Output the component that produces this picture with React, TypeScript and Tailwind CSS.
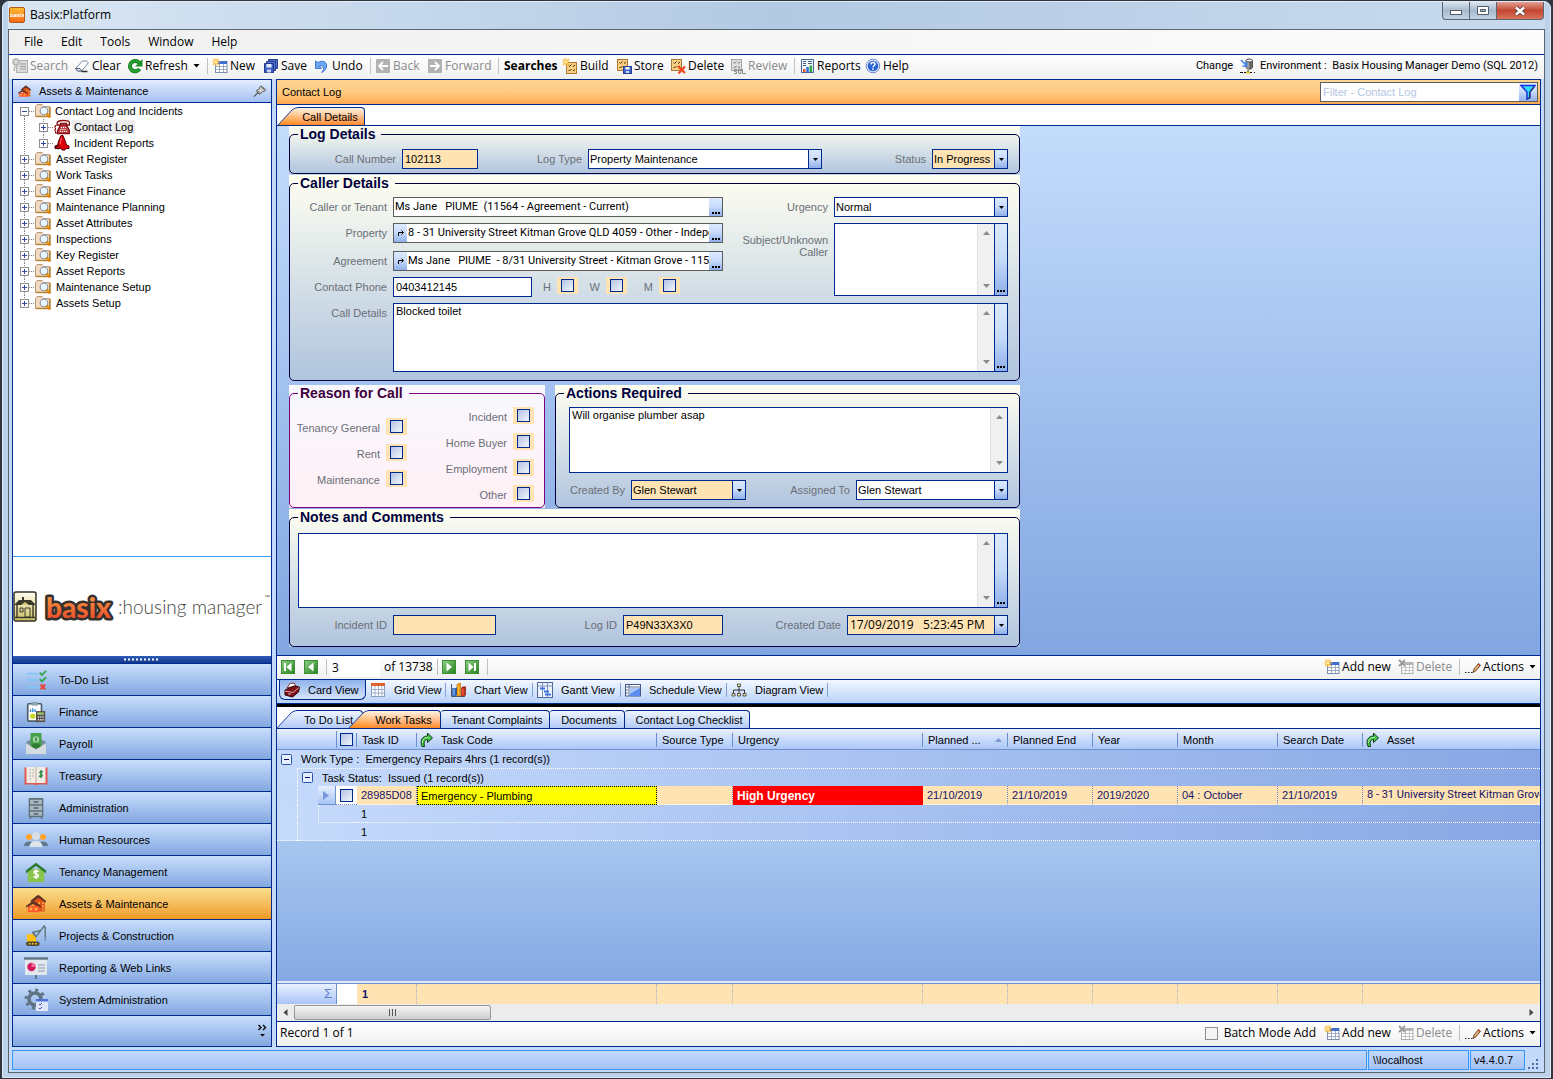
import React from "react";

const UI = "font-['Open_Sans','Noto_Sans',sans-serif]";
const ARIAL = "font-['Liberation_Sans',Arial,sans-serif]";
const NARROW = "font-['Roboto','Liberation_Sans',sans-serif]";
const GLOSS = "bg-linear-to-b from-[#dceafe] via-[#c6dafa] to-[#8fb0ea]";

/* ---------- icons ---------- */

type IconProps = { size?: number; children: React.ReactNode; box?: number };
function Svg({ size = 16, box = 16, children }: IconProps) {
  return (
    <svg width={size} height={size} viewBox={`0 0 ${box} ${box}`} aria-hidden="true" className="shrink-0">
      {children}
    </svg>
  );
}

function TableBody({ head, line, x = 3 }: { head: string; line: string; x?: number }) {
  return (
    <g>
      <rect x={x + 0.5} y="3.5" width={15 - x - 0.5} height="11" fill="#fff" stroke={line} />
      <rect x={x + 1} y="3" width={14 - x} height="3" fill={head} />
      <path d={`M${x + 1} 8.5H15M${x + 1} 11.5H15M${x + 4.5} 6V14M${x + 8.5} 6V14`} stroke={line} strokeWidth="1" fill="none" opacity="0.7" />
    </g>
  );
}
const Burst = () => (
  <g stroke="#ffb73a" strokeWidth="1.100">
    <path d="M4 0V8M0 4H8M1 1L7 7M7 1L1 7" />
    <circle cx="4" cy="4" r="1.400" fill="#fff3b0" stroke="none" />
  </g>
);
const Check = ({ grey = false }: { grey?: boolean }) => (
  <g>
    <rect x="1.5" y="1.5" width="10" height="11" fill={grey ? "#dcdcdc" : "#fccf80"} stroke={grey ? "#a8a8a8" : "#a87a35"} />
    <path d="M3.500 4.500l1 1 2-2M8 5.500l2-1.500M3.500 9l1 1 2-2M8 10l2-1.500" stroke={grey ? "#777" : "#3a2c10"} fill="none" />
  </g>
);

const NewTable = () => (<Svg><TableBody head="#3f6fd0" line="#7d8fae" /><Burst /></Svg>);
const DelTable = () => (
  <Svg><TableBody head="#b5b5b5" line="#b0b0b0" /><path d="M1 1l6 6M7 1L1 7" stroke="#9a9a9a" strokeWidth="1.8" /></Svg>
);
const SearchIcon = () => (
  <Svg>
    <rect x="4.500" y="2.500" width="11" height="12" fill="#dadada" stroke="#b0b0b0" />
    <path d="M8 6h6M8 8.500h6M8 11h6" stroke="#a0a0a0" />
    <circle cx="4" cy="4" r="3" fill="#d6d6d6" stroke="#b4b4b4" strokeWidth="1.500" />
    <path d="M3 8l-1 5" stroke="#b4b4b4" strokeWidth="1.500" />
  </Svg>
);
const Eraser = () => (
  <Svg>
    <path d="M1.500 10.500L8.500 3h4l2 1.500-7 8.500h-4z" fill="#fff" stroke="#7f8bad" />
    <path d="M1.500 10.500h4.500l2 2.500H3.500z" fill="#dfe6f4" stroke="#5d6880" />
    <path d="M7.500 13.500h6" stroke="#333" strokeWidth="1.500" />
  </Svg>
);
const Refresh = () => (
  <Svg>
    <path d="M12.300 5A5.200 5.200 0 1 0 12.500 11" fill="none" stroke="#0f6a18" strokeWidth="4" />
    <path d="M12.300 5A5.200 5.200 0 1 0 12.500 11" fill="none" stroke="#25a02f" strokeWidth="2.800" />
    <path d="M15.500 1v7.500H8z" fill="#1c8f27" />
  </Svg>
);
const SaveIcon = () => (
  <Svg>
    <path d="M5.500 1.500h9v9h-3v-6h-6z" fill="#4a69c8" stroke="#2a3f93" />
    <path d="M3.500 3.500h9v9h-9z" fill="#5677d6" stroke="#2a3f93" />
    <path d="M1.500 5.500h9v9h-9z" fill="#3d5fc6" stroke="#233685" />
    <rect x="3.500" y="6" width="5" height="3.500" fill="#e7edfb" /><rect x="4" y="11.500" width="4" height="3" fill="#c9d4f1" />
  </Svg>
);
const Undo = () => (
  <Svg>
    <path d="M4 4.500C9 1.500 13.500 4 12.500 9 12 11.500 10 13.500 7.500 14.500c2-2.500 2.500-4 1.500-5.500-.8-1.300-2-1.300-3.500-.8L7.500 10.500H1.500V3z" fill="#6aa6f2" stroke="#2d66c4" strokeWidth=".8" />
  </Svg>
);
const Nav = ({ d }: { d: string }) => (
  <Svg><rect x="1" y="1" width="14" height="14" rx="1" fill="#b2b2b2" /><path d={d} stroke="#fff" strokeWidth="1.800" fill="none" /></Svg>
);
const Build = () => (<Svg><g transform="translate(3 3)"><Check /></g><Burst /></Svg>);
const Store = () => (
  <Svg><Check /><rect x="7.500" y="8.500" width="8" height="7" fill="#3f66c8" stroke="#223f92" /><rect x="9.500" y="9" width="4" height="2.500" fill="#fff" /><rect x="10" y="13" width="3" height="2" fill="#cfdcf8" /></Svg>
);
const DeleteSearch = () => (<Svg><Check /><path d="M8 8l7 7M15 8.500L8.500 15.500" stroke="#f04423" strokeWidth="2.200" /></Svg>);
const Review = () => (
  <Svg><Check grey /><path d="M7 11.500H4.500v2h2v2H4M8.500 11.500h2.500v4H8.500zM12.500 11v4.500H16" stroke="#8a8a8a" fill="none" /></Svg>
);
const Reports = () => (
  <Svg>
    <path d="M2.500 1.500h12v13h-12z" fill="#f3f7ff" stroke="#44639a" />
    <path d="M4 3.500h3M4 5.500h3M4 7.500h3M9 3.500h4M9 5.500h4" stroke="#49607f" />
    <rect x="4" y="11" width="2.500" height="3" fill="#e8582a" /><rect x="7.300" y="9" width="2.500" height="5" fill="#2f6fdc" /><rect x="10.600" y="7.500" width="2.500" height="6.500" fill="#2bab3a" />
  </Svg>
);
const HelpIcon = () => (
  <Svg>
    <circle cx="8" cy="8" r="6.800" fill="#e9f0ff" stroke="#6a86c9" /><circle cx="8" cy="8" r="5.300" fill="#2a62d6" />
    <path d="M6 6.500c0-2.600 4-2.600 4-.2 0 1.500-2 1.500-2 3.200M8 10.500v1.500" stroke="#fff" strokeWidth="1.500" fill="none" />
  </Svg>
);
const Db = () => (
  <Svg>
    <path d="M6 2.500v6.500c0 2.500 6.500 3 6.500 0V2.500z" fill="#a2a2a2" stroke="#4c4c4c" /><path d="M10.500 4v7" stroke="#555" strokeWidth="2" />
    <ellipse cx="9.200" cy="2.500" rx="3.300" ry="1.500" fill="#f0f0f0" stroke="#4c4c4c" />
    <path d="M1 2l5 5M6.500 3.500V8H2.500" stroke="#3f7fe8" strokeWidth="1.600" fill="none" />
    <path d="M0 14.500h3M4 14.500h8M14 14.500h1M8 12v3" stroke="#111" /><path d="M6 14.500h4" stroke="#d9c52c" strokeWidth="2" />
  </Svg>
);
const House = ({ size = 16 }: { size?: number }) => (
  <Svg size={size}>
    <path d="M5 5l5-3.500 5 4V14H8z" fill="#e0521c" /><path d="M3.500 5.500L9 1h1.500L16 5.500v1.500L10 3 4.500 6.500z" fill="#5b3226" />
    <path d="M1.500 9.500h9V14.500h-9z" fill="#ff5a2c" /><path d="M0 9.500L5 6h2l5 3.500v1.200L6 8 0 10.700z" fill="#5d2f25" />
    <path d="M3 11h2v2H3zM7 11h2v2H7zM10 6.500h1.200V8H10zM12.800 6.500H14V8h-1.200zM12.800 9H14v1.500h-1.200zM12.800 11.500H14V13h-1.200z" fill="#ffb44a" />
  </Svg>
);
const Pin = () => (
  <Svg size={14}><path d="M7.500 3.500L9 2l5.500 4.500-1.500 2-2.500.3-2.500 3-1-.2L4 8.300l.5-1.300 3-1.500z" fill="#d4d4d4" stroke="#555" /><path d="M9.500 3.500l3.500 3M5 8l3 2.500" stroke="#333" /><path d="M5.500 10L1 14.500" stroke="#555" strokeWidth="1.300" /></Svg>
);
const Folder = () => (
  <Svg>
    <path d="M.500 3.500L2 1.500h5l1.500 2h6v10H.500z" fill="#f0d9c0" stroke="#b59a7c" /><path d="M1 13.500h14V4" stroke="#b5822f" fill="none" strokeWidth="1.500" />
    <circle cx="9" cy="8" r="3.800" fill="#eaf4ff" stroke="#8f9bab" strokeWidth="1.200" /><path d="M11.500 10.500l3.500 4" stroke="#e08a12" strokeWidth="2.500" />
  </Svg>
);
const Phone = () => (
  <Svg>
    <path d="M3 5C3 2 5 1.500 9 1.500s6.500 0 6.500 3v1.500h-3V4.500h-6V6H3z" fill="#fff" stroke="#8b0f12" strokeWidth="1.300" />
    <path d="M6.500 6h6l3 6v2.500h-12V12z" fill="#c04a4c" stroke="#8b0f12" strokeWidth="1.300" />
    <path d="M7 8.500h5M6.500 10.500h6M6 12.500h7" stroke="#fff" strokeDasharray="1 1" /><path d="M0 8h3M1.500 6v8M0 11h3M1 14h2" stroke="#8b0f12" strokeDasharray="2 1" />
  </Svg>
);
const Siren = () => (
  <Svg><path d="M7 .5h2L11 5.500l1.500 4.500L15 11v2.500h-3L11 15H8l-1-1.500H1V11l2.500-1L5 5z" fill="#e0000c" stroke="#5a0004" /><path d="M7.500 3L6 9" stroke="#ff7a7a" /><path d="M1 12l4-1.500M4 14l2.500-1" stroke="#111" fill="none" /></Svg>
);
const Funnel = () => (
  <Svg><path d="M1 1.500h14L10 8v5.500l-3 1.500V8z" fill="#30dcff" stroke="#1b30d8" strokeWidth="1.500" /><path d="M14 3L9.500 8.500V14L7.500 15" stroke="#333" fill="none" /></Svg>
);
const Pager = ({ d }: { d: string }) => (
  <Svg size={14} box={14}>
    <defs><linearGradient id="pg" x1="0" y1="0" x2="1" y2="1"><stop offset="0" stopColor="#8ed184" /><stop offset="1" stopColor="#23811c" /></linearGradient></defs>
    <rect x=".500" y=".500" width="13" height="13" fill="url(#pg)" stroke="#3a8f33" /><path d={d} fill="#fff" />
  </Svg>
);
const Pencil = () => (
  <Svg><path d="M0 13.500h1.500M3 13.500h1.500M6 13.500h1.500" stroke="#222" /><path d="M8 13.500l1-3.500 4.500-5.500 2 1.700-4.500 5.500z" fill="#e8b070" stroke="#4a2b18" strokeWidth=".8" /><path d="M13 5l2 1.500" stroke="#c22" /></Svg>
);
const GreenArrow = () => (
  <Svg><path d="M3 14.500C.5 8.500 3.500 4 8.500 4V1L13.500 6 8.500 10.500V7.500C5.500 7.500 4.500 10 5.500 14.500z" fill="#45c648" stroke="#0a3a10" /><path d="M3.500 11C3 8 5 5.500 9.500 5.500" stroke="#baf0a8" fill="none" /></Svg>
);

const CardIcon = () => (
  <Svg><path d="M3 6l3-4.500 4-.5 2 3z" fill="#fff" stroke="#7a3035" /><path d="M1 8l9-4 5.500 1-1 5-6 5L1 13z" fill="#7b1218" stroke="#34060a" /><path d="M1 9l8 1.500 6-5M4 12h3" stroke="#e9a7aa" fill="none" /></Svg>
);
const GridIcon = () => (
  <Svg><rect x="1.500" y="1.500" width="13" height="13" fill="#fff" stroke="#8a9bbd" /><rect x="1" y="1" width="14" height="3" fill="#e0622e" /><path d="M1.500 7.500h13M1.500 11h13M5 4v10.500M8.500 4v10.500M12 4v10.500" stroke="#9fb0cf" /></Svg>
);
const ChartIcon = () => (
  <Svg><path d="M1.500 2v12.500H15" stroke="#556" fill="none" /><path d="M2.500 6.500h3V14h-3z" fill="#5c98ee" stroke="#1f4a9a" strokeWidth=".6" /><path d="M5.500 6.500L7 5v8l-1.500 1z" fill="#1f4a9a" /><path d="M7 2.500h3V14H7z" fill="#ffb52e" stroke="#a5670c" strokeWidth=".6" /><path d="M7 2.500L8.500 1H11v12l-1 1V2.500z" fill="#d98a15" /><path d="M11.500 6h3v8h-3z" fill="#e4452a" stroke="#8c1f10" strokeWidth=".6" /><path d="M11.500 6l1-1.500H16V13l-1.500 1V6z" fill="#a52916" /></Svg>
);
const GanttIcon = () => (
  <Svg><rect x=".500" y=".500" width="15" height="15" fill="#eef4ff" stroke="#50679c" /><path d="M.5 4H15.500M5.500.500v15M10.500.500v15" stroke="#7f92bd" /><path d="M3 6.500h5M7 9.500h5M8 12.500h6" stroke="#3c74dd" strokeWidth="2" /></Svg>
);
const ScheduleIcon = () => (
  <Svg><rect x=".500" y="2.500" width="15" height="11.500" fill="#fff" stroke="#44588c" /><path d="M5 6h10v8H5z" fill="#5b8df0" /><path d="M5 6h10L5 12z" fill="#a9c6fb" /><path d="M1 5h14M4 3v11M1 8h2M1 11h2" stroke="#5b6c96" /></Svg>
);
const DiagramIcon = () => (
  <Svg><path d="M8 5v3M2.500 11V8h11v3M8 8v3" stroke="#333" fill="none" /><g fill="#f6f0a8" stroke="#555"><path d="M6.500 2h3v2.500h-3zM1 11.500h3V14H1zM6.500 11.500h3V14h-3zM12 11.500h3V14h-3z" /></g></Svg>
);

/* side navigation pictures, 24-unit grid */
const ToDo = () => (<Svg size={22} box={24}><path d="M2 5h12M2 12h12M2 20h12" stroke="#84c5f7" strokeWidth="2" /><path d="M16 4l2.500 2.500L23 2M16 11l2.500 2.500L23 9" stroke="#35a853" strokeWidth="2" fill="none" /><path d="M17 17l5 5M22 17l-5 5" stroke="#ee4438" strokeWidth="2.200" /></Svg>);
const Finance = () => (<Svg size={22} box={24}><rect x="3" y="3" width="15" height="19" rx="1" fill="#fff" stroke="#4c5f69" strokeWidth="1.800" /><rect x="7" y="1" width="7" height="4" fill="#8fa3ad" /><path d="M6 12V9M8.500 12V8M11 12v-3" stroke="#3189dd" strokeWidth="1.500" /><circle cx="8.500" cy="16.500" r="3" fill="#c9d92a" /><rect x="12" y="11" width="10" height="12" fill="#59504d" /><rect x="13.500" y="12.500" width="7" height="2.500" fill="#9ccc65" /><path d="M14 17.500h7M14 20.500h7" stroke="#ddd" strokeWidth="1.800" strokeDasharray="1.500 1" /></Svg>);
const Payroll = () => (<Svg size={22} box={24}><path d="M1 10l5-3h12l5 3v13H1z" fill="#78909c" /><rect x="6" y="0" width="12" height="16" fill="#43a047" /><circle cx="12" cy="7" r="3.500" fill="#a5d6a7" /><path d="M12 5v4" stroke="#1b6b20" strokeWidth="1.500" /><path d="M7 13l5-2.500L17 13v4H7z" fill="#2e7d32" /><path d="M1 11l11 7 11-7v12H1z" fill="#d5dce0" /></Svg>);
const Treasury = () => (<Svg size={24} box={24}><path d="M.500 3.500h23v17h-10l-1.500 1-1.500-1H.500z" fill="#e05a52" /><path d="M2.500 3h9.500v16H2.500zM12 3h9.500v16H12z" fill="#f1ebe5" /><path d="M12 3v16" stroke="#b9aaa0" /><path d="M5 6h5M5 9h5M5 12h5M5 15h3" stroke="#bbb0a8" strokeDasharray="2 1" /><path d="M19 8c-3-2-4 1-2 2s1.500 3.500-2 2M17 6v8" stroke="#2e8b4a" fill="none" strokeWidth="1.400" /></Svg>);
const Cabinet = () => (<Svg size={22} box={24}><rect x="4" y="1" width="16" height="21" rx="1" fill="#60717c" /><path d="M5.500 3h13v5h-13zM5.500 9.500h13v5h-13zM5.500 16h13v4.500h-13z" fill="#a9b8c0" /><path d="M9.500 5.500h5M9.500 12h5M9.500 18.500h5" stroke="#4f5f69" strokeWidth="1.600" /><path d="M6 22v1.500M18 22v1.500" stroke="#4f5f69" strokeWidth="2" /></Svg>);
const People = () => (<Svg size={24} box={24}><circle cx="5" cy="9" r="3" fill="#ffa52b" /><circle cx="19" cy="9" r="3" fill="#ffa52b" /><path d="M0 18c0-6 10-6 10 0zM14 18c0-6 10-6 10 0z" fill="#61798a" /><circle cx="12" cy="8" r="4" fill="#d8dfe4" /><path d="M5.500 19c0-8 13-8 13 0z" fill="#dfe5e9" /></Svg>);
const Tenancy = () => (<Svg size={22} box={24}><path d="M3 9h18v14H3z" fill="#8bc34a" /><path d="M12 2L23 10v3.500L12 5.500 1 13.500V10z" fill="#2e7d32" /><path d="M15 11.500c-5-2.500-7 1.500-3 2.500s3.500 5.500-3 3M12 9.500v10" stroke="#fff" fill="none" strokeWidth="1.600" /></Svg>);
const Crane = () => (<Svg size={22} box={24}><path d="M2 10h7l3 3v6H2z" fill="#fcc015" /><path d="M8 8l4 5L21 1l1 2v11M12 13l-3-5 8-2" stroke="#5f7680" fill="none" strokeWidth="1.600" /><path d="M22 14c2 1 0 4-1.500 2" stroke="#5f7680" fill="none" /><rect x="1" y="18" width="15" height="5" rx="2.500" fill="#4b4a3a" /><path d="M4 20.500h10" stroke="#fcc015" strokeWidth="1.800" strokeDasharray="2 1.500" /></Svg>);
const Board = () => (<Svg size={24} box={24}><path d="M1 3h22v16H1z" fill="#e3e8ec" /><path d="M0 2.500h24" stroke="#64788a" strokeWidth="2.500" /><circle cx="7.500" cy="11" r="4.200" fill="#d3185e" /><path d="M7.500 11V6.800a4.200 4.200 0 0 1 4.200 4.200z" fill="#f06a9a" /><path d="M14 9h7M14 12h7M14 15h7" stroke="#a2b4c2" strokeWidth="1.300" /><path d="M12 19v4" stroke="#64788a" strokeWidth="2" /></Svg>);
const Gear = () => (<Svg size={24} box={24}><circle cx="11" cy="11" r="6" fill="none" stroke="#5d7381" strokeWidth="3.500" /><circle cx="11" cy="11" r="9" fill="none" stroke="#5d7381" strokeWidth="3" strokeDasharray="3 4.060" /><rect x="12" y="11" width="12" height="12" fill="#dfe6fb" /><rect x="12" y="11" width="12" height="2.500" fill="#4f74d9" /><path d="M15 16l1 1 2-2M15 20l1 1 2-2" stroke="#3e51c2" fill="none" /></Svg>);

const Caret = () => (<svg width="7" height="4" viewBox="0 0 7 4" aria-hidden="true" className="shrink-0"><path d="M.500 0h6L3.500 3.500z" fill="#000" /></svg>);

/* ---------- form controls ---------- */

const Label = ({ w, id, children }: { w: string; id: string; children: React.ReactNode }) => (
  <label htmlFor={id} className={`${w} mr-1.5 shrink-0 text-right leading-3 text-[#6b6f78]`}>{children}</label>
);

function TextBox({ id, value, w, tint }: { id: string; value: string; w: string; tint?: boolean }) {
  return <input id={id} defaultValue={value} className={`${w} h-5 shrink-0 border border-[#00298f] px-0.5 outline-none ${tint ? "bg-[#ffe3b3]" : "bg-white"}`} />;
}

function Combo({ id, value, w, tint, big }: { id: string; value: string; w: string; tint?: boolean; big?: boolean }) {
  return (
    <div className={`${w} grid h-5 shrink-0 grid-cols-[1fr_13px] border border-[#00298f] ${tint ? "bg-[#ffe3b3]" : "bg-white"}`}>
      <select id={id} className={`col-span-2 col-start-1 row-start-1 w-full appearance-none bg-transparent whitespace-pre outline-none ${big ? `pl-0.5 text-[12px] ${UI}` : "pl-px"}`}>
        <option>{value}</option>
      </select>
      <span className={`pointer-events-none col-start-2 row-start-1 flex items-center justify-center border-l border-[#00298f] ${GLOSS}`}>
        <svg width="5" height="3" viewBox="0 0 5 3" aria-hidden="true"><path d="M0 0h5L2.500 3z" fill="#000" /></svg>
      </span>
    </div>
  );
}

function Lookup({ id, value, jump }: { id: string; value: string; jump?: boolean }) {
  return (
    <div className="flex h-5 w-[330px] shrink-0 border border-[#5d5d5d] bg-white">
      {jump && (
        <button aria-label="Open record" className={`flex w-[13px] shrink-0 items-center justify-center ${GLOSS}`}>
          <svg width="8" height="8" viewBox="0 0 8 8" aria-hidden="true"><path d="M1.500 7V3.500H6M4.500 1.500l2 2-2 2" stroke="#000" fill="none" /></svg>
        </button>
      )}
      <input id={id} defaultValue={value} className={`min-w-0 flex-1 pl-px outline-none ${NARROW}`} />
      <button aria-label="Browse" className={`flex w-[13px] shrink-0 items-end justify-center pb-0.5 ${GLOSS}`}><Dots /></button>
    </div>
  );
}
const Dots = () => (<svg width="8" height="2" viewBox="0 0 8 2" aria-hidden="true"><path d="M0 0h2v2H0zM3 0h2v2H3zM6 0h2v2H6z" fill="#000" /></svg>);

function Memo({ id, value, size, more, label }: { id: string; value: string; size: string; more?: boolean; label?: string }) {
  return (
    <div className={`${size} flex shrink-0 border border-[#00298f] bg-white`}>
      <textarea id={id} aria-label={label} defaultValue={value} className="min-w-0 flex-1 resize-none overflow-hidden px-0.5 leading-[14px] outline-none" />
      <div className="flex w-[17px] shrink-0 flex-col items-center justify-between border-l border-[#e2e2e2] bg-[#f0f0f0] py-[7px]">
        <svg width="7" height="4" viewBox="0 0 7 4" aria-hidden="true"><path d="M0 4h7L3.500 0z" fill="#8b8b8b" /></svg>
        <svg width="7" height="4" viewBox="0 0 7 4" aria-hidden="true"><path d="M0 0h7L3.500 4z" fill="#8b8b8b" /></svg>
      </div>
      {more && <button aria-label="Expand" className={`flex w-[13px] shrink-0 items-end justify-center border-l border-[#00298f] pb-[3px] ${GLOSS}`}><Dots /></button>}
    </div>
  );
}

const Tick = ({ id, label }: { id?: string; label?: string }) => (
  <input id={id} aria-label={label} type="checkbox" className="block size-[13px] appearance-none border border-[#00298f] bg-linear-to-br from-[#b3c3e3] to-[#f3f6fc]" />
);
const TickPad = ({ id }: { id: string }) => (
  <span className="flex h-[17px] w-[21px] shrink-0 items-center justify-center bg-[#ffe3b3]"><Tick id={id} /></span>
);
function TickRow({ id, label, w }: { id: string; label: string; w: string }) {
  return (<div className="flex h-[17px] items-center"><Label id={id} w={w}><span className="block pt-0.5">{label}</span></Label><TickPad id={id} /></div>);
}

function Group({ title, plum, grow, children }: { title: string; plum?: boolean; grow?: string; children: React.ReactNode }) {
  return (
    <div className={`${grow ?? ""} flex min-w-0 flex-col ${plum ? "bg-linear-to-b from-[#f8f8ff] to-[#fff0f5]" : "bg-linear-to-b from-[#fffff0] to-[#b0c4de]"}`}>
      <fieldset className={`min-w-0 flex-1 rounded-[5px] border ${plum ? "border-[#800080]" : "border-[#000040]"}`}>
        <legend className={`ml-2 h-4 pr-1.5 pl-0.5 text-[14px] leading-4 font-bold ${plum ? "text-[#40003c]" : "text-[#000040]"}`}>{title}</legend>
        {children}
      </fieldset>
    </div>
  );
}

/* ---------- tabs ---------- */

function Tab({ label, hot, slant, w, lap }: { label: string; hot?: boolean; slant?: boolean; w: string; lap?: boolean }) {
  const gid = hot ? "tabHot" : "tabCool";
  return (
    <button role="tab" aria-selected={!!hot} className={`flex h-[18px] shrink-0 ${lap ? "-ml-3.5" : ""}`}>
      {slant && (
        <svg width="20" height="18" viewBox="0 0 20 18" aria-hidden="true" className="shrink-0">
          <defs>
            <linearGradient id={gid} x1="0" y1="0" x2="0" y2="1">
              <stop offset="0" stopColor={hot ? "#fff3e2" : "#eef4fe"} /><stop offset="1" stopColor={hot ? "#ff8a1c" : "#b3cbf7"} />
            </linearGradient>
          </defs>
          <path d="M0 18L14 3Q17 .500 20 .500V18z" fill={`url(#${gid})`} /><path d="M0 18L14 3Q17 .500 20 .500" fill="none" stroke="#1d3fa0" />
        </svg>
      )}
      <span className={`${w} flex h-[18px] items-center justify-center rounded-tr-[4px] border-t border-r border-[#00298f] bg-linear-to-b whitespace-nowrap ${slant ? "pr-0.5" : "rounded-tl-[3px] pl-1"} ${hot ? "from-[#fff3e2] to-[#ff8a1c]" : "from-[#eef4fe] to-[#b3cbf7]"}`}>
        {label}
      </span>
    </button>
  );
}

/* ---------- window parts ---------- */

const Sep = ({ w = "w-[6px]" }: { w?: string }) => (<span className={`flex h-4 shrink-0 ${w}`}><span className="h-full w-px bg-[#c0c0c0]" /></span>);

function Tool({ icon, label, w, off }: { icon: React.ReactNode; label: string; w: string; off?: boolean }) {
  return (<button disabled={off} className={`flex shrink-0 items-center gap-0.5 whitespace-nowrap ${w} ${off ? "text-[#8a8a8a]" : "text-black"}`}>{icon}{label}</button>);
}

function Toolbar() {
  return (
    <div className={`flex h-6 items-center bg-linear-to-b from-white to-[#f0f0f0] pb-0.5 pl-[3px] text-[12px] ${UI}`}>
      <Tool icon={<SearchIcon />} label="Search" w="w-[62px]" off />
      <Tool icon={<Eraser />} label="Clear" w="w-[53px]" />
      <Tool icon={<Refresh />} label="Refresh" w="w-[66px]" />
      <button aria-label="Refresh options" className="flex w-[14px] shrink-0"><Caret /></button>
      <Sep w="w-[5px]" />
      <Tool icon={<NewTable />} label="New" w="w-[51px]" />
      <Tool icon={<SaveIcon />} label="Save" w="w-[51px]" />
      <Tool icon={<Undo />} label="Undo" w="w-[56px]" />
      <Sep w="w-[5px]" />
      <Tool icon={<Nav d="M13 8H4M8 4L4 8l4 4" />} label="Back" w="w-[52px]" off />
      <Tool icon={<Nav d="M3 8h9M8 4l4 4-4 4" />} label="Forward" w="w-[71px]" off />
      <Sep w="w-[6px]" />
      <b className="w-[58px] shrink-0 font-bold">Searches</b>
      <Tool icon={<Build />} label="Build" w="w-[54px]" />
      <Tool icon={<Store />} label="Store" w="w-[54px]" />
      <Tool icon={<DeleteSearch />} label="Delete" w="w-[60px]" />
      <Tool icon={<Review />} label="Review" w="w-[64px]" off />
      <Sep w="w-[5px]" />
      <Tool icon={<Reports />} label="Reports" w="w-[66px]" />
      <Tool icon={<HelpIcon />} label="Help" w="w-[50px]" />
      <div className={`ml-auto flex items-center gap-1 pr-1.5 text-[11px] whitespace-pre ${NARROW}`}>
        Change <Db />Environment :{"  "}Basix Housing Manager Demo (SQL 2012)
      </div>
    </div>
  );
}

function Toggle({ open, first, last }: { open?: boolean; first?: boolean; last?: boolean }) {
  return (
    <button aria-label={open ? "Collapse" : "Expand"} className="shrink-0">
      <svg width="18" height="16" viewBox="0 0 18 16" aria-hidden="true" className="block">
        <path d={`${first ? "" : "M7.500 0V4"}${last ? "" : "M7.500 13V16"}M12 8.500H18`} stroke="#808080" strokeDasharray="1 1" />
        <rect x="3.500" y="4.500" width="8" height="8" fill="#fff" stroke="#8e8e8e" />
        <path d={open ? "M5 8.500h5" : "M5 8.500h5M7.500 6v5"} stroke="#2b4a9c" />
      </svg>
    </button>
  );
}

const branches = ["Asset Register", "Work Tasks", "Asset Finance", "Maintenance Planning", "Asset Attributes", "Inspections", "Key Register", "Asset Reports", "Maintenance Setup", "Assets Setup"];

function Leaf({ icon, label, active, last }: { icon: React.ReactNode; label: string; active?: boolean; last?: boolean }) {
  return (
    <li className="flex h-4 items-center">
      <svg width="19" height="16" viewBox="0 0 19 16" aria-hidden="true" className="shrink-0"><path d="M7.500 0V16" stroke="#808080" strokeDasharray="1 1" /></svg>
      <Toggle last={last} />{icon}
      <span className={`ml-0.5 px-0.5 ${active ? "bg-[#ececec]" : ""}`}>{label}</span>
    </li>
  );
}

function Tree() {
  return (
    <ul className="min-h-[453px] flex-1 bg-white pl-1">
      <li>
        <div className="flex h-4 items-center"><Toggle open first /><Folder /><span className="ml-1">Contact Log and Incidents</span></div>
        <ul>
          <Leaf icon={<Phone />} label="Contact Log" active />
          <Leaf icon={<Siren />} label="Incident Reports" last />
        </ul>
      </li>
      {branches.map((b, i) => (
        <li key={b} className="flex h-4 items-center"><Toggle last={i === branches.length - 1} /><Folder /><span className="ml-[5px]">{b}</span></li>
      ))}
    </ul>
  );
}

const sections: [string, React.ReactNode][] = [
  ["To-Do List", <ToDo />], ["Finance", <Finance />], ["Payroll", <Payroll />], ["Treasury", <Treasury />],
  ["Administration", <Cabinet />], ["Human Resources", <People />], ["Tenancy Management", <Tenancy />],
  ["Assets & Maintenance", <House size={20} />], ["Projects & Construction", <Crane />],
  ["Reporting & Web Links", <Board />], ["System Administration", <Gear />],
];

function Logo() {
  return (
    <div className="flex h-[100px] items-center border-t border-[#3399ff] bg-white">
      <svg width="24" height="32" viewBox="0 0 24 32" aria-hidden="true" className="shrink-0">
        <defs><linearGradient id="lg" x1="0" y1="0" x2="0" y2="1"><stop offset="0" stopColor="#fffdf0" /><stop offset="1" stopColor="#cdbf5e" /></linearGradient></defs>
        <rect x="1" y="1" width="22" height="29" rx="2" fill="url(#lg)" stroke="#33312a" strokeWidth="1.500" />
        <path d="M1 14L6 9h3V6h2v3h7l5 5z" fill="#3b382c" /><path d="M4 14v12M20 14v12M2 26.500h20" stroke="#3b382c" strokeWidth="1.400" />
        <path d="M7 17h3v4H7zM12 17h5v9h-5z" fill="none" stroke="#3b382c" /><path d="M8 14l4-3 4 3z" fill="#d8cc7c" />
      </svg>
      <svg width="76" height="40" viewBox="0 0 76 40" role="img" aria-label="basix" className="ml-[5px] shrink-0">
        <defs><linearGradient id="bx" x1="0" y1="0" x2="0" y2="1"><stop offset="0.300" stopColor="#f58a3c" /><stop offset="0.900" stopColor="#e8482a" /></linearGradient></defs>
        <text x="4" y="31" fontSize="28" fontWeight="900" fontFamily="Lato, 'Open Sans', sans-serif" fill="url(#bx)" stroke="#33302d" strokeWidth="5" strokeLinejoin="round" paintOrder="stroke">basix</text>
      </svg>
      <span className="font-['Lato',sans-serif] text-[19px] leading-6 font-light whitespace-nowrap text-[#45463c]">:housing manager</span>
      <span className="mb-5 ml-0.5 text-[6px] leading-3 text-[#55564c]">™</span>
    </div>
  );
}

function Sidebar() {
  return (
    <aside className="flex w-[260px] shrink-0 flex-col border border-[#00298f]">
      <div className="flex h-[23px] items-center border-b border-[#00298f] bg-linear-to-b from-[#e3edfd] to-[#a5c0f2] pr-1 pl-[5px]">
        <House size={13} /><span className="ml-2 flex-1">Assets &amp; Maintenance</span>
        <button aria-label="Pin"><Pin /></button>
      </div>
      <Tree />
      <Logo />
      <div className="flex h-[7px] items-center justify-center bg-linear-to-b from-[#2d5cb8] to-[#12398f]">
        <svg width="36" height="3" viewBox="0 0 36 3" aria-hidden="true"><path d="M0 1.500h36" stroke="#fff" strokeWidth="2" strokeDasharray="2 2" /></svg>
      </div>
      <nav className="flex flex-col">
        {sections.map(([label, icon]) => (
          <button key={label} className={`flex h-8 items-center border-t border-[#00298f] bg-linear-to-b text-left ${label === "Assets & Maintenance" ? "from-[#fbdf8c] to-[#ee9a1d]" : "from-[#c9dffc] to-[#82a7e0]"}`}>
            <span className="flex w-[46px] justify-center">{icon}</span>{label}
          </button>
        ))}
        <div className="flex h-[31px] items-center justify-end border-t border-[#00298f] bg-linear-to-b from-[#c9dffc] to-[#82a7e0] pr-1">
          <button aria-label="More sections">
            <svg width="9" height="14" viewBox="0 0 9 14" aria-hidden="true"><path d="M.5 1l2.500 2.500L.5 6M5 1l2.500 2.500L5 6" stroke="#000" fill="none" strokeWidth="1.300" /><path d="M2 10h5l-2.500 2.500z" /></svg>
          </button>
        </div>
      </nav>
    </aside>
  );
}

function CardForm() {
  return (
    <div className="flex-none bg-linear-to-b from-[#c4dcfc] to-[#82a6e0] pb-2 pl-3">
      <div className="flex w-[731px] flex-col">
        <Group title="Log Details">
          <div className="flex items-center pt-[7px] pb-1">
            <Label id="num" w="w-[106px]">Call Number</Label><TextBox id="num" value="102113" w="w-[76px]" tint />
            <Label id="type" w="w-[104px]">Log Type</Label><Combo id="type" value="Property Maintenance" w="w-[234px]" />
            <Label id="status" w="w-[104px]">Status</Label><Combo id="status" value="In Progress" w="w-[76px]" tint />
          </div>
        </Group>
        <div className="pt-px">
          <Group title="Caller Details">
            <div className="flex flex-col gap-1.5 pt-[6px] pb-2">
              <div className="flex">
                <div className="flex flex-col gap-1.5">
                  <div className="flex items-center"><Label id="caller" w="w-[97px]">Caller or Tenant</Label><Lookup id="caller" value="Ms Jane   PIUME  (11564 - Agreement - Current)" /></div>
                  <div className="flex items-center"><Label id="prop" w="w-[97px]">Property</Label><Lookup id="prop" jump value="8 - 31 University Street Kitman Grove QLD 4059 - Other - Independent" /></div>
                  <div className="flex items-center pt-0.5"><Label id="agr" w="w-[97px]">Agreement</Label><Lookup id="agr" jump value="Ms Jane   PIUME  - 8/31 University Street - Kitman Grove - 11564" /></div>
                  <div className="flex items-start">
                    <div className="flex items-center"><Label id="phone" w="w-[97px]">Contact Phone</Label><TextBox id="phone" value="0403412145" w="w-[139px]" /></div>
                    <TickRow id="h" label="H" w="w-[19px]" /><TickRow id="w" label="W" w="w-[22px]" /><TickRow id="m" label="M" w="w-[26px]" />
                  </div>
                </div>
                <div className="flex flex-col gap-1.5">
                  <div className="flex items-center"><Label id="urg" w="w-[105px]">Urgency</Label><Combo id="urg" value="Normal" w="w-[174px]" /></div>
                  <div className="flex items-start">
                    <Label id="subj" w="w-[105px]"><span className="block pt-[11px]">Subject/Unknown<br />Caller</span></Label>
                    <Memo id="subj" value="" size="h-[73px] w-[174px]" more />
                  </div>
                </div>
              </div>
              <div className="flex items-start">
                <Label id="det" w="w-[97px]"><span className="block pt-1">Call Details</span></Label>
                <Memo id="det" value="Blocked toilet" size="h-[69px] w-[615px]" more />
              </div>
            </div>
          </Group>
        </div>
        <div className="flex gap-2.5 pt-1">
          <Group title="Reason for Call" plum grow="w-[256px]">
            <div className="flex">
              <div className="flex flex-col gap-[9px] pt-[17px]">
                <TickRow id="tg" label="Tenancy General" w="w-[90px]" /><TickRow id="rent" label="Rent" w="w-[90px]" /><TickRow id="maint" label="Maintenance" w="w-[90px]" />
              </div>
              <div className="flex flex-col gap-[9px] pt-1.5">
                <TickRow id="inc" label="Incident" w="w-[100px]" /><TickRow id="hb" label="Home Buyer" w="w-[100px]" /><TickRow id="emp" label="Employment" w="w-[100px]" /><TickRow id="oth" label="Other" w="w-[100px]" />
              </div>
            </div>
          </Group>
          <Group title="Actions Required" grow="flex-1">
            <div className="flex flex-col gap-[7px] pt-1.5 pb-[7px] pl-[13px]">
              <Memo id="act" label="Actions Required" value="Will organise plumber asap" size="h-[66px] w-[439px]" />
              <div className="flex items-center">
                <Label id="by" w="w-[56px]">Created By</Label><Combo id="by" value="Glen Stewart" w="w-[115px]" tint />
                <Label id="to" w="w-[104px]">Assigned To</Label><Combo id="to" value="Glen Stewart" w="w-[152px]" />
              </div>
            </div>
          </Group>
        </div>
        <div className="pt-px">
          <Group title="Notes and Comments">
            <div className="flex flex-col gap-[7px] pt-2 pb-[11px]">
              <div className="pl-2"><Memo id="notes" label="Notes and Comments" value="" size="h-[75px] w-[710px]" more /></div>
              <div className="flex items-center">
                <Label id="iid" w="w-[97px]">Incident ID</Label><TextBox id="iid" value="" w="w-[103px]" tint />
                <Label id="lid" w="w-[121px]">Log ID</Label><TextBox id="lid" value="P49N33X3X0" w="w-[100px]" tint />
                <Label id="cd" w="w-[118px]">Created Date</Label><Combo id="cd" value={"17/09/2019\u00a0\u00a0 5:23:45 PM"} w="w-[161px]" tint big />
              </div>
            </div>
          </Group>
        </div>
      </div>
    </div>
  );
}

function RecordTools() {
  return (
    <>
      <Tool icon={<NewTable />} label="Add new" w="w-[74px]" />
      <Tool icon={<DelTable />} label="Delete" w="w-[61px]" off />
      <Sep w="w-[6px]" />
      <button className="flex items-center gap-0.5 whitespace-nowrap"><Pencil />Actions<span className="ml-[3px]"><Caret /></span></button>
    </>
  );
}

const views: [string, React.ReactNode, string][] = [
  ["Grid View", <GridIcon />, "w-[76px]"], ["Chart View", <ChartIcon />, "w-[83px]"], ["Gantt View", <GanttIcon />, "w-[84px]"],
  ["Schedule View", <ScheduleIcon />, "w-[102px]"], ["Diagram View", <DiagramIcon />, "w-[97px]"],
];

function Pagerbar() {
  const b = "shrink-0";
  return (
    <div className={`flex h-[25px] items-center border-t border-b border-[#00298f] bg-linear-to-b from-white to-[#f0f0f0] pr-1 pb-px pl-1 text-[12px] ${UI}`}>
      <button aria-label="First" className={`${b} mr-[9px]`}><Pager d="M3 3h2v8H3zM10.500 2.500v9L5.500 7z" /></button>
      <button aria-label="Previous" className={`${b} mr-2`}><Pager d="M9.500 2.500v9L4 7z" /></button>
      <Sep w="w-1" />
      <input aria-label="Record number" defaultValue="3" className="h-5 w-[50px] bg-white px-0.5 outline-none" />
      <span className="w-[57px] pl-1 whitespace-nowrap">of 13738</span>
      <Sep w="w-[5px]" />
      <button aria-label="Next" className={`${b} mr-[9px]`}><Pager d="M4.500 2.500v9L10 7z" /></button>
      <button aria-label="Last" className={`${b} mr-2`}><Pager d="M3.500 2.500v9L8.500 7zM9 3h2v8H9z" /></button>
      <Sep />
      <div className="ml-auto flex items-center"><RecordTools /></div>
    </div>
  );
}

function ViewStrip() {
  return (
    <div className="flex h-6 items-start border-b border-[#00298f] bg-linear-to-b from-[#f3f8ff] to-[#b9d2f8] pl-0.5">
      <button className="flex h-5 w-[87px] items-center rounded-b-[6px] border border-t-0 border-[#00298f] bg-linear-to-b from-[#8fb2ec] to-[#d5e4fb] pl-1"><CardIcon /><span className="ml-2">Card View</span></button>
      {views.map(([label, icon, w]) => (
        <button key={label} className={`${w} ml-1 flex h-5 items-center whitespace-nowrap`}>
          {icon}<span className="ml-2 flex-1 text-left">{label}</span><span className="h-3.5 w-px bg-[#7f9edb]" />
        </button>
      ))}
    </div>
  );
}

const heads = ["Source Type", "Urgency", "Planned ...", "Planned End", "Year", "Month", "Search Date"];
const HEAD = "h-[21px] border-b border-[#6d8fd0] p-0 pt-px text-left font-normal whitespace-nowrap";
const Bar = ({ tight }: { tight?: boolean }) => <span className={`-ml-px h-3.5 w-px shrink-0 bg-[#6d8fd0] ${tight ? "mr-0.5" : "mr-[5px]"}`} />;
const CELL = "overflow-hidden border-r border-b border-dotted border-r-[#6b86c8] border-b-white p-0 pl-1 whitespace-nowrap text-[#15156b]";

function Fold() {
  return (
    <button aria-label="Collapse group" className="shrink-0">
      <svg width="11" height="11" viewBox="0 0 11 11" aria-hidden="true" className="block"><rect x=".500" y=".500" width="10" height="10" rx="1" fill="#e6efff" stroke="#2c52a8" /><path d="M3 5.500h5" stroke="#000050" /></svg>
    </button>
  );
}

function TaskGrid() {
  return (
    <div className="overflow-hidden bg-linear-to-r from-[#c6dafb] to-[#88a7e4]">
      <table className="w-full table-fixed border-separate border-spacing-0">
        <colgroup>
          <col className="w-5" /><col className="w-[21px]" /><col className="w-[18px]" /><col className="w-[21px]" /><col className="w-[60px]" /><col className="w-[240px]" />
          <col className="w-[76px]" /><col className="w-[190px]" /><col className="w-[85px]" /><col className="w-[85px]" /><col className="w-[85px]" /><col className="w-[100px]" /><col className="w-[85px]" /><col />
        </colgroup>
        <thead className="bg-linear-to-b from-[#e8f0fe] to-[#a9c5f6]">
          <tr>
            <th colSpan={3} className={HEAD} aria-label="Row" />
            <th className={HEAD}><div className="flex h-[17px] items-center border-l border-[#6d8fd0] pl-[3px]"><Tick label="Select all" /></div></th>
            <th className={HEAD}><div className="flex items-center"><Bar />Task ID</div></th>
            <th className={HEAD}><div className="flex items-center"><Bar tight /><GreenArrow /><span className="ml-1.5">Task Code</span></div></th>
            {heads.map((h) => (
              <th key={h} className={HEAD}>
                <div className="flex items-center pr-1.5"><Bar /><span className="flex-1">{h}</span>
                  {h === "Planned ..." && <svg width="7" height="4" viewBox="0 0 7 4" aria-hidden="true"><path d="M0 4h7L3.500 0z" fill="#7c97d4" /></svg>}
                </div>
              </th>
            ))}
            <th className={HEAD}><div className="flex items-center"><Bar tight /><GreenArrow /><span className="ml-1.5">Asset</span></div></th>
          </tr>
        </thead>
        <tbody>
          <tr className="h-[18px]">
            <td colSpan={14} className="p-0"><div className="flex items-center gap-[9px] pl-1"><Fold /><span>Work Type :&nbsp; Emergency Repairs 4hrs (1 record(s))</span></div></td>
          </tr>
          <tr className="h-[18px]">
            <td className="p-0" />
            <td colSpan={13} className="border-t border-l border-dotted border-white p-0"><div className="flex items-center gap-[9px] pl-1"><Fold /><span>Task Status:&nbsp; Issued (1 record(s))</span></div></td>
          </tr>
          <tr className="h-[19px] bg-[#ffe3b3]">
            <td className="bg-[#c5d9fb] p-0" />
            <td className="border-l border-dotted border-white bg-[#c4d8fb] p-0" />
            <td className="border-r border-b border-[#6d8fd0] bg-linear-to-b from-[#e6effe] to-[#a9c5f6] p-0 pl-[5px]"><svg width="6" height="9" viewBox="0 0 6 9" aria-hidden="true"><path d="M0 0l6 4.500L0 9z" fill="#7896d8" /></svg></td>
            <td className="border-b border-dotted border-[#6d8fd0] bg-white p-0 pl-1"><Tick label="Select 28985D08" /></td>
            <td className={CELL}>28985D08</td>
            <td className="border border-dotted border-black bg-[#ffff00] p-0 pl-[3px] whitespace-nowrap">Emergency - Plumbing</td>
            <td className={CELL} />
            <td className="bg-[#ff0000] p-0 pl-1 text-[12px] leading-4 font-bold whitespace-nowrap text-white">High Urgency</td>
            <td className={CELL}>21/10/2019</td><td className={CELL}>21/10/2019</td><td className={CELL}>2019/2020</td><td className={CELL}>04 : October</td><td className={CELL}>21/10/2019</td>
            <td className={`border-b border-dotted border-white p-0 pl-1 whitespace-nowrap text-[#15156b] ${NARROW}`}>8 - 31 University Street Kitman Grove</td>
          </tr>
          <tr className="h-[18px]">
            <td className="p-0" /><td className="border-l border-dotted border-white p-0" />
            <td colSpan={2} className="border-b border-l border-dotted border-white p-0" /><td colSpan={10} className="border-b border-dotted border-white p-0 pl-1">1</td>
          </tr>
          <tr className="h-[18px]">
            <td className="border-b border-dotted border-white p-0" /><td colSpan={3} className="border-b border-l border-dotted border-white p-0" />
            <td colSpan={10} className="border-b border-dotted border-white p-0 pl-1">1</td>
          </tr>
        </tbody>
      </table>
    </div>
  );
}

const totals = ["w-[60px]", "w-[240px]", "w-[76px]", "w-[190px]", "w-[85px]", "w-[85px]", "w-[85px]", "w-[100px]", "w-[85px]"];

function SummaryAndScroll() {
  return (
    <>
      <div className="flex h-[21px] shrink-0 overflow-hidden border-t border-[#6d8fd0] bg-[#ffe3b3]">
        <div className="flex w-[60px] shrink-0 items-center justify-end border-r border-[#6d8fd0] bg-linear-to-b from-[#e8f0fe] to-[#a9c5f6] pr-1 text-[13px] text-[#6080c8]">Σ</div>
        <div className="w-5 shrink-0 bg-white" />
        {totals.map((w, i) => (
          <div key={i} className={`${w} flex shrink-0 items-center border-r border-dotted border-[#a9b2c9] pl-[5px] font-bold text-[#15156b]`}>{i === 0 ? "1" : ""}</div>
        ))}
      </div>
      <div className="flex h-[17px] shrink-0 items-center justify-between bg-[#ececec] px-1">
        <div className="flex items-center gap-1.5">
          <svg width="5" height="7" viewBox="0 0 5 7" aria-hidden="true" className="ml-0.5"><path d="M4.500 0v7L.5 3.500z" fill="#444" /></svg>
          <div className="flex h-[15px] w-[197px] items-center justify-center rounded-[2px] border border-[#979797] bg-linear-to-b from-[#f4f4f4] to-[#cfcfcf]">
            <svg width="8" height="7" viewBox="0 0 8 7" aria-hidden="true"><path d="M.5 0v7M3.500 0v7M6.500 0v7" stroke="#555" /></svg>
          </div>
        </div>
        <svg width="5" height="7" viewBox="0 0 5 7" aria-hidden="true" className="mr-0.5"><path d="M.5 0v7l4-3.500z" fill="#444" /></svg>
      </div>
    </>
  );
}

function MainPane() {
  return (
    <main className="flex min-w-0 flex-1 flex-col border border-[#00298f]">
      <div className="flex h-[25px] items-center justify-between border-b border-[#00298f] bg-linear-to-b from-[#ffd591] via-[#ffcb80] to-[#ffa94f] pr-0.5 pl-[5px]">
        <h1>Contact Log</h1>
        <div className="flex h-5 w-[218px] border border-[#5d5d5d] bg-white">
          <input aria-label="Filter" placeholder="Filter - Contact Log" className="min-w-0 flex-1 pl-0.5 outline-none placeholder:text-[#b3c6e6]" />
          <button aria-label="Apply filter" className={`flex w-[18px] items-center justify-center ${GLOSS}`}><Funnel /></button>
        </div>
      </div>
      <div role="tablist" className="flex h-[21px] items-end border-b border-[#00298f] bg-white pl-px"><Tab label="Call Details" hot slant w="w-[67px]" /></div>
      <CardForm />
      <Pagerbar />
      <ViewStrip />
      <div role="tablist" className="flex h-[25px] items-end border-t-[3px] border-b border-t-black border-b-[#00298f] bg-white">
        <Tab label="To Do List" slant w="w-[66px]" /><Tab label="Work Tasks" hot slant lap w="w-[72px]" /><Tab label="Tenant Complaints" w="w-[109px]" /><Tab label="Documents" w="w-[75px]" /><Tab label="Contact Log Checklist" w="w-[125px]" />
      </div>
      <TaskGrid />
      <div className="min-h-[60px] flex-1 border-b-2 border-[#dfeafd] bg-linear-to-b from-[#a7c6ef] to-[#86a9e4]" />
      <SummaryAndScroll />
      <div className={`flex h-[25px] shrink-0 items-center border-t border-[#00298f] bg-linear-to-b from-white to-[#f0f0f0] pr-1 pb-0.5 pl-[3px] text-[12px] ${UI}`}>
        <span>Record 1 of 1</span>
        <label className="mr-2 ml-auto flex items-center gap-1.5"><input type="checkbox" className="size-[13px] appearance-none border border-[#8e8f8f] bg-[#f4f4f4]" />Batch Mode Add</label>
        <RecordTools />
      </div>
    </main>
  );
}

const wb = "flex h-full items-center justify-center border border-t-0 border-[#5a6675]";

export default function App() {
  return (
    <div className={`flex min-h-screen flex-col bg-[#30363d] px-0.5 pt-px pb-0.5 text-[11px] leading-[14px] text-black ${ARIAL}`}>
      <div className="flex flex-1 flex-col rounded-t-[7px] border border-[#dfeaf6] bg-[#bcd2ea] px-[5px] pb-1">
        <header className="flex h-[27px] items-start bg-linear-to-r from-[#d9e6f3] via-[#b3cae4] to-[#c8daee]">
          <div className={`flex h-[25px] items-center gap-[5px] pl-px text-[12px] ${UI}`}>
            <span className="flex size-4 items-center justify-center overflow-hidden rounded-[2px] border border-[#b35a17] bg-linear-to-b from-[#ffb92e] to-[#f26a1b] text-[6px] font-bold text-white">basix</span>
            Basix:Platform
          </div>
          <div className="mr-px ml-auto flex h-[18px] w-[102px]">
            <button aria-label="Minimize" className={`${wb} w-[28px] rounded-bl-[4px] bg-linear-to-b from-[#dbe5f0] via-[#a5b8cd] to-[#c2d3e5]`}>
              <svg width="12" height="5" viewBox="0 0 12 5" aria-hidden="true" className="mt-1"><rect x=".500" y=".500" width="11" height="4" fill="#fff" stroke="#535a66" /></svg>
            </button>
            <button aria-label="Restore" className={`${wb} w-[27px] border-l-0 bg-linear-to-b from-[#dbe5f0] via-[#a5b8cd] to-[#c2d3e5]`}>
              <svg width="12" height="9" viewBox="0 0 12 9" aria-hidden="true"><path d="M.5.5h11v8H.5z" fill="#fff" stroke="#535a66" /><path d="M3.500 3.500h5v2h-5z" fill="#a8b8cc" stroke="#535a66" /></svg>
            </button>
            <button aria-label="Close" className={`${wb} w-[47px] rounded-br-[4px] border-l-0 bg-linear-to-b from-[#e3a094] via-[#c3452f] to-[#d8735b]`}>
              <svg width="12" height="10" viewBox="0 0 12 10" aria-hidden="true"><path d="M2 1.500l8 7M10 1.500l-8 7" stroke="#4d4450" strokeWidth="4" /><path d="M2 1.500l8 7M10 1.500l-8 7" stroke="#fff" strokeWidth="2.400" /></svg>
            </button>
          </div>
        </header>
        <div className="flex flex-1 flex-col border border-[#5c6670] bg-[#c5dafb]">
          <nav className={`flex h-[25px] items-center gap-[18px] border-b border-[#00298f] bg-linear-to-r from-[#f0f0f0] to-[#fcfcfc] pl-[15px] text-[12px] ${UI}`}>
            {["File", "Edit", "Tools", "Window", "Help"].map((m) => (<button key={m}>{m}</button>))}
          </nav>
          <Toolbar />
          <div className="flex flex-1 gap-1 pr-[3px] pl-[3px]"><Sidebar /><MainPane /></div>
          <footer className="flex h-[25px] items-start gap-px pt-[3px] pr-1 pl-[3px]">
            <div className="h-5 flex-1 border border-[#3399ff] bg-linear-to-b from-[#c3d9fb] to-[#a6c2f5]" />
            <div className="flex h-5 w-[101px] items-center border border-[#3399ff] bg-linear-to-b from-[#c3d9fb] to-[#a6c2f5] pl-1">\\localhost</div>
            <div className="flex h-5 w-[55px] items-center border border-[#3399ff] bg-linear-to-b from-[#c3d9fb] to-[#a6c2f5] pl-[3px]">v4.4.0.7</div>
            <svg width="14" height="20" viewBox="0 0 14 20" aria-hidden="true"><path d="M10 9h2v2h-2zM6 13h2v2H6zM10 13h2v2h-2zM2 17h2v2H2zM6 17h2v2H6zM10 17h2v2h-2z" fill="#4a6ca8" /></svg>
          </footer>
        </div>
      </div>
    </div>
  );
}
